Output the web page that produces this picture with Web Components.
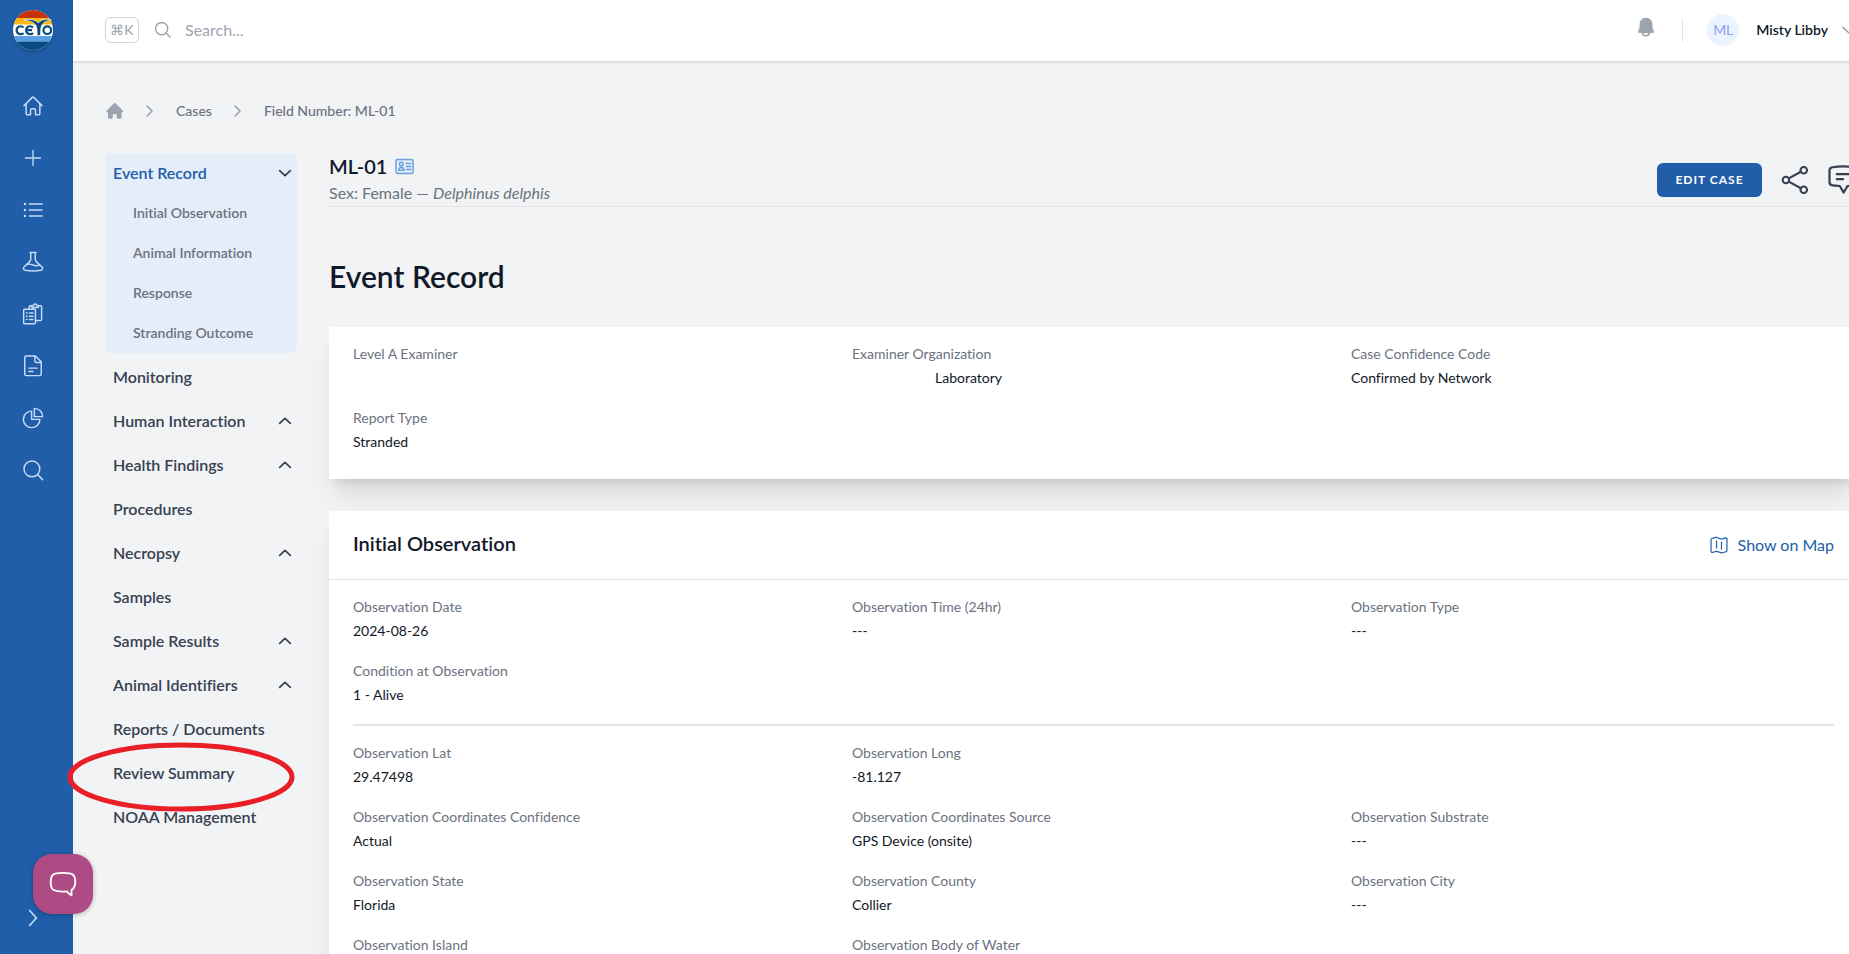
<!DOCTYPE html>
<html lang="en">
<head>
<meta charset="utf-8">
<title>Case ML-01</title>
<style>
  :root {
    --brand: #215ea9;
    --ink: #111827;
    --slate: #374151;
    --muted: #6b7280;
    --soft: #9ca3af;
    --line: #e2e4e8;
  }
  html, body { height: 100%; }
  body {
    margin: 0;
    background: #f2f3f5;
    color: var(--ink);
    font: 400 14px/20px Lato, "Liberation Sans", sans-serif;
    font-variant-ligatures: none;
  }
</style>
</head>
<body>
<app-shell>
  <app-rail slot="rail"></app-rail>
  <app-topbar slot="top"></app-topbar>
  <crumb-trail slot="crumbs"></crumb-trail>
  <case-nav slot="nav">
    <nav-group label="Event Record" open>
      <nav-link>Initial Observation</nav-link>
      <nav-link>Animal Information</nav-link>
      <nav-link>Response</nav-link>
      <nav-link>Stranding Outcome</nav-link>
    </nav-group>
    <nav-group label="Monitoring" plain></nav-group>
    <nav-group label="Human Interaction"></nav-group>
    <nav-group label="Health Findings"></nav-group>
    <nav-group label="Procedures" plain></nav-group>
    <nav-group label="Necropsy"></nav-group>
    <nav-group label="Samples" plain></nav-group>
    <nav-group label="Sample Results"></nav-group>
    <nav-group label="Animal Identifiers"></nav-group>
    <nav-group label="Reports / Documents" plain></nav-group>
    <nav-group label="Review Summary" plain marked></nav-group>
    <nav-group label="NOAA Management" plain></nav-group>
  </case-nav>
  <case-header></case-header>
  <record-title>Event Record</record-title>
  <record-card>
    <field-grid>
      <field-item label="Level A Examiner"></field-item>
      <field-item label="Examiner Organization" indented>Laboratory</field-item>
      <field-item label="Case Confidence Code">Confirmed by Network</field-item>
      <field-item label="Report Type">Stranded</field-item>
    </field-grid>
  </record-card>
  <record-card heading="Initial Observation" map>
    <field-grid>
      <field-item label="Observation Date">2024-08-26</field-item>
      <field-item label="Observation Time (24hr)">---</field-item>
      <field-item label="Observation Type">---</field-item>
      <field-item label="Condition at Observation">1 - Alive</field-item>
    </field-grid>
    <field-grid ruled>
      <field-item label="Observation Lat">29.47498</field-item>
      <field-item label="Observation Long" last>-81.127</field-item>
      <field-item label="Observation Coordinates Confidence">Actual</field-item>
      <field-item label="Observation Coordinates Source">GPS Device (onsite)</field-item>
      <field-item label="Observation Substrate">---</field-item>
      <field-item label="Observation State">Florida</field-item>
      <field-item label="Observation County">Collier</field-item>
      <field-item label="Observation City">---</field-item>
      <field-item label="Observation Island"></field-item>
      <field-item label="Observation Body of Water"></field-item>
    </field-grid>
  </record-card>
  <chat-launcher slot="chat"></chat-launcher>
</app-shell>

<script>
const define = (name, render) => customElements.define(name, class extends HTMLElement {
  connectedCallback() {
    if (this.shadowRoot) return;
    const t = document.createElement('template');
    t.innerHTML = `<style>:host,*{box-sizing:border-box}a{color:inherit;text-decoration:none}button{font:inherit;color:inherit;background:none;border:0;padding:0;cursor:pointer}</style>` + render(this);
    this.attachShadow({ mode: 'open' }).append(t.content.cloneNode(true));
  }
});

const ICONS = {
  home: '<path d="M2.2 11.6 11.2 2.6c.5-.5 1.2-.5 1.6 0l9 9M4.5 9.6v10.6c0 .8.6 1.3 1.2 1.3H9.3v-5.2c0-.7.5-1.2 1.2-1.2h3c.7 0 1.2.5 1.2 1.2v5.2h3.6c.7 0 1.2-.5 1.2-1.3V9.6"/>',
  plus: '<path d="M12 3v18M3 12h18"/>',
  list: '<path d="M8 5.5h14M8 12h14M8 18.5h14"/><g fill="currentColor" stroke="none"><circle cx="3.2" cy="5.5" r="1.3"/><circle cx="3.2" cy="12" r="1.3"/><circle cx="3.2" cy="18.5" r="1.3"/></g>',
  flask: '<path d="M8.6 1.7h6.8M9.6 1.7v7.1c0 1.6-.9 2.6-2 3.6l-5.2 4.7c-1.5 1.4-.9 3.6 1 4 5.4.9 11.8.9 17.2 0 1.9-.4 2.5-2.6 1-4l-5.2-4.7c-1.1-1-2-2-2-3.6V1.700M5.200 14.800c2.500-1 4.500-.5 6.800.5 2.400 1 4.500 1 7.200 0"/>',
  clip: '<path d="M3 6.800h10.500c.7 0 1.200.5 1.200 1.200v13.500c0 .7-.5 1.200-1.200 1.200H3c-.7 0-1.200-.5-1.200-1.200V8c0-.7.5-1.200 1.200-1.200zM7.800 6.700V4.300c0-.7.5-1.200 1.200-1.200h1.700M17.800 3.100h2.400c.7 0 1.200.5 1.200 1.200v13.700c0 .7-.5 1.200-1.200 1.200h-5.400M10.800 4.800V2.700h1.800c.2-2.300 3.200-2.300 3.400 0h1.800v2.100zM4.800 11h.8M4.800 14.500h.8M4.800 18h.8M8 11h4M8 14.500h4M8 18h4"/>',
  doc: '<path d="M4.600 1h10L21 7.500v13.300c0 1-.7 1.700-1.600 1.700H4.600c-1 0-1.600-.7-1.600-1.700V2.700C3 1.700 3.700 1 4.600 1zM14 1v5.500c0 1 .7 1.700 1.700 1.700H21M7.500 14.300h9M7.500 18h4.500"/>',
  pie: '<path d="M10.500 4.500a9 9 0 1 0 9 9h-9zM13.500 1.500v9h9a9 9 0 0 0-9-9z"/>',
  search: '<circle cx="10.800" cy="10.800" r="8.600"/><path d="m17 17 5.500 5.500"/>',
  right: '<path d="m8 3 8 9-8 9"/>',
  crumb: '<path d="m8.500 6 6 6-6 6"/>',
  down: '<path d="m4 8.500 8 7.500 8-7.500"/>',
  up: '<path d="m4 15.500 8-7.500 8 7.500"/>',
  house: '<path fill="currentColor" stroke="none" d="M10.700 1.700a1.400 1.400 0 0 1 2 0l9.800 9.800c.9.900.3 2.300-1 2.300h-.8v7c0 .8-.6 1.400-1.400 1.400h-3.500c-.8 0-1.400-.6-1.400-1.400v-4.600H9v4.600c0 .8-.6 1.400-1.400 1.400H4.100c-.8 0-1.400-.6-1.400-1.400v-7h-.8c-1.300 0-1.900-1.400-1-2.300z"/>',
  bell: '<path fill="currentColor" stroke="none" d="M12 .8c-4.700 0-7.600 3.400-7.600 7.800 0 3.800-.6 6.600-2 8.600-.5.800 0 1.600.9 1.700 5.600.8 11.800.8 17.400 0 .9-.1 1.400-.9.900-1.700-1.400-2-2-4.800-2-8.600 0-4.400-2.900-7.800-7.600-7.800z"/><path stroke-width="2" d="M8 19.200c.3 4.400 7.700 4.400 8 0"/>',
  share: '<circle cx="4.200" cy="12" r="2.800"/><circle cx="19.500" cy="3.600" r="2.800"/><circle cx="19.500" cy="20.400" r="2.800"/><path d="m6.700 10.600 10.300-5.700M6.700 13.400l10.300 5.700"/>',
  comment: '<path d="M3.500 1.800c5.500-.8 11.500-.8 17 0 1.300.2 2.300 1.200 2.300 2.500v9.500c0 1.400-.8 2.300-2.200 2.500-1.600.3-3.300.4-5 .5L12.500 22l-3.100-5.200c-2-.1-4-.2-5.900-.5-1.400-.2-2.300-1.100-2.300-2.500V4.300c0-1.300 1-2.300 2.300-2.500zM7 7.300h10M7 11.300h5"/>',
  map: '<path d="M3.200 3c1.600-.2 3.200-1.300 5-1.200 2.700.3 5 2.400 7.700 2.200 1.900-.2 3.300-1.400 5.200-1.600.9 0 1.500.6 1.500 1.400v15.500c0 .8-.5 1.200-1.200 1.500-1.800.6-3.500 1.700-5.400 1.600-2.800-.2-5.200-1.900-8-1.800-1.500.1-2.800.9-4.200 1.200-1.400.2-2.400-.4-2.400-1.600V5c0-1.100.8-1.800 1.800-2zM8.700 6.500v9.500M15.300 8v9.500"/>',
  idcard: '<rect x="1.200" y="3.200" width="21.600" height="17.600" rx="2.500" fill="#e1edfb"/><circle cx="8" cy="9" r="2.300"/><path d="M4.500 16.800c0-2.200 1.300-3.600 3.500-3.600s3.500 1.400 3.500 3.600zM14.500 8.300H20M14.500 12H20M14.500 15.800H20"/>',
  chat: '<path d="M12 2.500c4.300 0 7.200.4 8.800 1.800 1.200 1.100 1.700 3.200 1.700 6 0 3.200-.7 5.500-3.200 6.800v4.700c-1.800-1-3-2-3.800-3.400-1.100.1-2.200.1-3.500.1-4.300 0-7.200-.5-8.800-1.900-1.200-1.100-1.700-3-1.700-5.800S2 5.400 3.200 4.300C4.800 2.900 7.700 2.500 12 2.500z"/>'
};
define('ui-icon', el => `
  <style>:host{display:block;width:${el.getAttribute('size') || 20}px;height:${el.getAttribute('size') || 20}px;flex:none}svg{display:block;width:100%;height:100%}</style>
  <svg viewBox="0 0 24 24" fill="none" stroke="currentColor" stroke-width="${el.getAttribute('weight') || 1.6}" stroke-linecap="round" stroke-linejoin="round" aria-hidden="true">${ICONS[el.getAttribute('name')]}</svg>`);

define('app-shell', () => `
  <style>
    :host{display:grid;grid-template-columns:73px minmax(0,1fr);height:100vh;overflow:hidden;position:relative}
    .page{display:flex;flex-direction:column;min-width:0;min-height:0}
    /* the scroller reaches 8px under the rail's edge so that the marker ring is not cut */
    .scroll{flex:1;min-height:0;overflow:hidden auto;scrollbar-width:none;margin-left:-8px;padding:40px 0 0 40px;position:relative}
    .cols{display:grid;grid-template-columns:192px minmax(0,1fr);gap:32px;margin-top:32px;align-items:start}
    main{margin-right:-9px;min-width:0}
  </style>
  <slot name="rail"></slot>
  <div class="page">
    <slot name="top"></slot>
    <div class="scroll">
      <slot name="crumbs"></slot>
      <div class="cols"><slot name="nav"></slot><main><slot></slot></main></div>
    </div>
  </div>
  <slot name="chat"></slot>`);

define('app-rail', () => `
  <style>
    :host{display:flex;flex-direction:column;align-items:center;background:var(--brand);color:#c3dcf8;padding:10px 7px 26px 0}
    nav{display:flex;flex-direction:column;margin-top:30px}
    nav a{display:grid;place-items:center;width:52px;height:52px}
    .logo svg{display:block;filter:drop-shadow(0 2px 2px #0003)}
    button{margin-top:auto}
  </style>
  <a class="logo" href="#" aria-label="Home page">
    <svg width="40" height="40" viewBox="0 0 40 40">
      <defs><clipPath id="disc"><circle cx="20" cy="20" r="20"/></clipPath></defs>
      <g clip-path="url(#disc)">
        <path fill="#fff" d="M0 0h40v40H0z"/><path fill="#c7310c" d="M0 0h40v8H0z"/><path fill="#f9b90f" d="M0 8h40v6.500H0z"/>
        <path fill="#5b9fe3" d="M0 26h40v5.500H0z"/><path fill="#064a80" d="M0 31.500h40V40H0z"/>
      </g>
      <path fill="#0b4a7d" stroke="#fff" stroke-width=".6" d="M11 10c5-1.500 11-.5 14.500 3 2.500-3.500 8-4.500 13-3-4 .5-7 1.500-9 4-1.500 2-2 5-2 11.500h-3.400c.2-5 0-8-1.300-10.500C20.500 12 16 10.500 11 10z"/>
      <g fill="none" stroke="#0b4a7d" stroke-width="2.200"><path d="M10.500 17.500a4 4 0 1 0 0 5.500M20 17.500a4 4 0 1 0 0 5.500M14 20.200h5"/><circle cx="34.300" cy="20.200" r="3.800"/></g>
    </svg>
  </a>
  <nav aria-label="Main">
    ${[['home', 'Dashboard'], ['plus', 'New'], ['list', 'Cases'], ['flask', 'Samples'], ['clip', 'Tasks'], ['doc', 'Reports'], ['pie', 'Charts'], ['search', 'Search']]
      .map(([i, t]) => `<a href="#" aria-label="${t}"><ui-icon name="${i}" size="${i === 'plus' ? 20 : 22}"></ui-icon></a>`).join('')}
  </nav>
  <button aria-label="Expand"><ui-icon name="right" size="20" weight="2"></ui-icon></button>`);

define('app-topbar', () => `
  <style>
    :host{display:flex;align-items:center;height:61px;flex:none;background:#fff;padding:0 0 2px 32px;margin-right:-9px;box-shadow:0 1px 3px #00000029;position:relative;z-index:1;color:var(--soft)}
    kbd{display:grid;place-items:center;width:34px;height:26px;border:1px solid #d1d5db;border-radius:6px;font:inherit}
    label{display:flex;align-items:center;gap:14px;flex:1;margin-left:15px}
    input{flex:1;border:0;outline:0;padding:0;background:none;font:inherit;font-size:16px;line-height:24px}
    input::placeholder{color:var(--soft);opacity:1}
    i{width:1px;height:24px;background:var(--line);margin:0 24px 0 26px}
    .user{display:flex;align-items:center;gap:17px;color:var(--ink);font-weight:600}
    .avatar{display:grid;place-items:center;width:32px;height:32px;border-radius:50%;background:#ebf3fe;color:#8da2f0;font-weight:400}
    .user ui-icon{color:var(--soft);margin-left:-5px}
    .bell{margin-bottom:6px}
  </style>
  <kbd>⌘K</kbd>
  <label><ui-icon name="search" size="17" weight="2"></ui-icon><input type="search" placeholder="Search..." aria-label="Search"></label>
  <button class="bell" aria-label="Notifications"><ui-icon name="bell"></ui-icon></button>
  <i></i>
  <button class="user"><span class="avatar">ML</span>Misty Libby<ui-icon name="down" size="18" weight="2"></ui-icon></button>`);

define('crumb-trail', () => `
  <style>
    :host{display:block;color:var(--muted);font-weight:500}
    nav{display:flex;align-items:center;height:20px}
    ui-icon{color:var(--soft)}
    .sep{margin:0 16px}
    a ui-icon{margin-left:1px}
  </style>
  <nav aria-label="Breadcrumb">
    <a href="#" aria-label="Home"><ui-icon name="house" size="18"></ui-icon></a>
    <ui-icon class="sep" name="crumb" weight="2"></ui-icon>
    <a href="#">Cases</a>
    <ui-icon class="sep" name="crumb" weight="2"></ui-icon>
    <a href="#">Field Number: ML-01</a>
  </nav>`);

define('case-nav', () => `
  <style>:host{display:flex;flex-direction:column;gap:4px}</style><slot></slot>`);

define('nav-group', el => {
  const label = el.getAttribute('label'), open = el.hasAttribute('open');
  return `
  <style>
    :host{display:block;border-radius:6px;position:relative;color:var(--slate)}
    :host([open]){background:#e5edf8}
    .head{display:flex;align-items:center;justify-content:space-between;width:100%;height:40px;padding:0 4px 0 8px;font-size:16px;line-height:24px;font-weight:600}
    :host([open]) span{color:var(--brand)}
    svg{position:absolute;left:-38px;top:-11px;pointer-events:none}
  </style>
  ${el.hasAttribute('plain')
    ? `<a class="head" href="#">${label}</a>`
    : `<button class="head" aria-expanded="${open}"><span>${label}</span><ui-icon name="${open ? 'down' : 'up'}" size="16" weight="2.600"></ui-icon></button>`}
  <slot></slot>
  ${el.hasAttribute('marked') ? '<svg width="228" height="70" aria-hidden="true"><ellipse cx="114" cy="35" rx="111" ry="32" fill="none" stroke="#e81f26" stroke-width="5"/></svg>' : ''}`;
});

define('nav-link', () => `
  <style>
    :host{display:block;color:var(--muted);font-weight:600}
    a{display:flex;align-items:center;height:40px;padding-left:28px}
  </style><a href="#"><slot></slot></a>`);

define('case-header', () => `
  <style>
    :host{display:flex;justify-content:space-between;align-items:flex-start;height:54px;border-bottom:1px solid var(--line)}
    h2{display:flex;align-items:center;gap:8px;margin:0;font-size:20px;line-height:26px;font-weight:600}
    h2 ui-icon{color:#6c9fdc}
    p{margin:0;padding-top:2px;font-size:16px;line-height:24px;color:var(--muted)}
    .actions{display:flex;align-items:center;gap:19px;padding-top:10px;color:var(--slate)}
    .edit{width:105px;height:34px;border-radius:6px;background:var(--brand);color:#fff;font-size:12px;font-weight:700;letter-spacing:1px}
  </style>
  <div>
    <h2>ML-01 <ui-icon name="idcard" size="19" weight="1.800"></ui-icon></h2>
    <p>Sex: Female — <em>Delphinus delphis</em></p>
  </div>
  <div class="actions">
    <button class="edit">EDIT CASE</button>
    <button aria-label="Share"><ui-icon name="share" size="28" weight="1.800"></ui-icon></button>
    <button aria-label="Comments"><ui-icon name="comment" size="30" weight="1.800"></ui-icon></button>
  </div>`);

define('record-title', () => `
  <style>:host{display:block}h1{margin:0;padding:50px 0 32px;font-size:30px;line-height:38px;font-weight:600}</style>
  <h1><slot></slot></h1>`);

define('record-card', el => `
  <style>
    :host{display:block;background:#fff;box-shadow:0 20px 25px -5px #0000001a,0 8px 10px -6px #0000001f;margin-bottom:32px}
    header{display:flex;align-items:center;justify-content:space-between;height:69px;padding:0 24px;border-bottom:1px solid var(--line)}
    h3{margin:0 0 4px;font-size:20px;line-height:28px;font-weight:600}
    a{display:flex;align-items:center;gap:10px;font-size:16px;line-height:24px;color:var(--brand)}
    .body{padding:0 24px 8px}
  </style>
  ${el.hasAttribute('heading') ? `<header><h3>${el.getAttribute('heading')}</h3>${el.hasAttribute('map') ? '<a href="#"><ui-icon name="map" size="18"></ui-icon>Show on Map</a>' : ''}</header>` : ''}
  <div class="body"><slot></slot></div>`);

define('field-grid', () => `
  <style>
    :host{display:grid;grid-template-columns:repeat(3,minmax(0,1fr));gap:20px 16px;padding:17px 0 19px}
    :host([ruled]){border-top:2px solid #e5e5e7}
  </style><slot></slot>`);

define('field-item', el => `
  <style>
    :host{display:block}
    :host([last]){grid-column:2 / -1}
    dl,dd{margin:0}
    dt{color:var(--muted)}
    dd{min-height:20px;margin-top:4px}
    :host([indented]) dd{padding-left:83px}
  </style><dl><dt>${el.getAttribute('label')}</dt><dd><slot></slot></dd></dl>`);

define('chat-launcher', () => `
  <style>
    :host{position:absolute;left:33px;bottom:40px}
    button{display:grid;place-items:center;width:60px;height:60px;border-radius:19px;background:#af4b84;color:#fff;box-shadow:0 1px 5px #0004}
  </style>
  <button aria-label="Chat"><ui-icon name="chat" size="28"></ui-icon></button>`);
</script>
</body>
</html>
